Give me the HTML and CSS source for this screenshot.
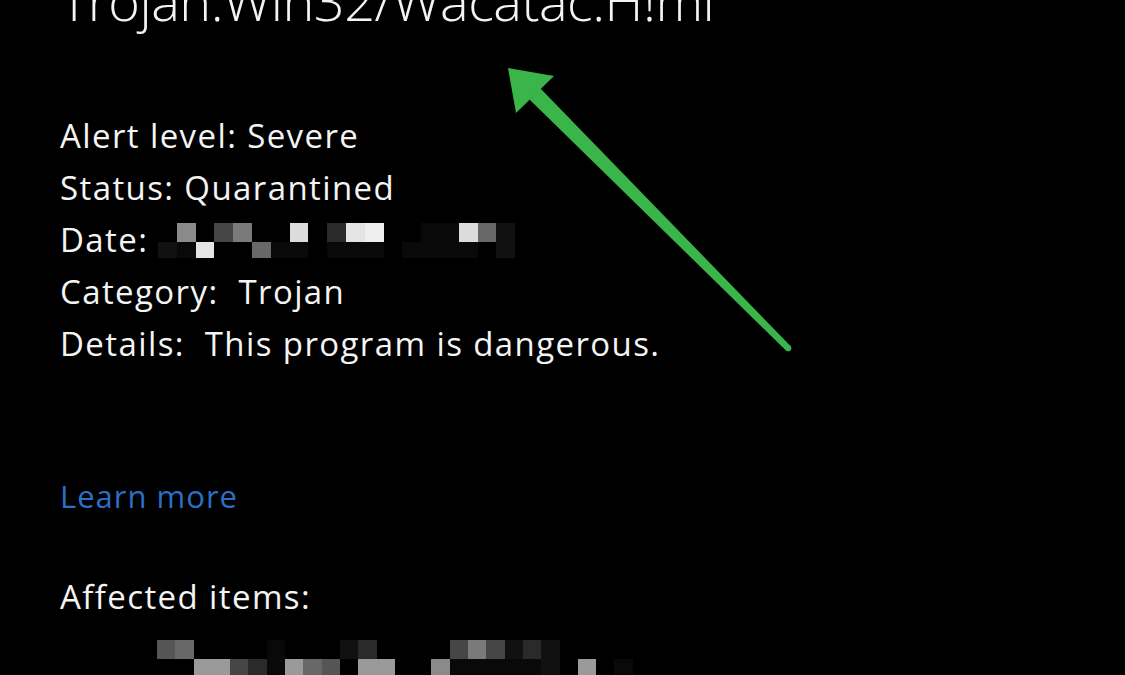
FILE: index.html
```html
<!DOCTYPE html>
<html>
<head>
<meta charset="utf-8">
<link rel="stylesheet" href="styles.css">
</head>
<body>
<div class="page">
  <h1 class="title">Trojan:Win32/Wacatac.H!ml</h1>
  <div class="info">
    <div class="line">Alert level: Severe</div>
    <div class="line">Status: Quarantined</div>
    <div class="line date-row">
      <span class="label">Date:</span>
      <div class="pix date-pix">
        <i class="g0"></i><i class="g8"></i><i class="g0"></i><i class="g4"></i><i class="g7"></i><i class="g0"></i><i class="g0"></i><i class="ga"></i><i class="g0"></i><i class="g3"></i><i class="gb"></i><i class="gc"></i><i class="g0"></i><i class="g0"></i><i class="g1"></i><i class="g1"></i><i class="ga"></i><i class="g6"></i><i class="g2"></i>
        <i class="g2 short"></i><i class="g1 short"></i><i class="gb short"></i><i class="g0 short"></i><i class="g0 short"></i><i class="g6 short"></i><i class="g1 short"></i><i class="g1 short"></i><i class="g0 short"></i><i class="g1 short"></i><i class="g1 short"></i><i class="g1 short"></i><i class="g0 short"></i><i class="g1 short"></i><i class="g1 short"></i><i class="g1 short"></i><i class="g1 short"></i><i class="g0 short"></i><i class="g2 short"></i>
      </div>
    </div>
    <div class="line">Category:&nbsp; Trojan</div>
    <div class="line">Details:&nbsp; This program is dangerous.</div>
  </div>
  <a class="learn">Learn more</a>
  <div class="affected">Affected items:</div>
  <div class="pix aff-pix">
    <i class="g5"></i><i class="g6"></i><i class="g0"></i><i class="g0"></i><i class="g0"></i><i class="g0"></i><i class="g1"></i><i class="g0"></i><i class="g0"></i><i class="g0"></i><i class="g2"></i><i class="g3"></i><i class="g0"></i><i class="g0"></i><i class="g0"></i><i class="g0"></i><i class="g4"></i><i class="g7"></i><i class="g4"></i><i class="g2"></i><i class="g3"></i><i class="g2"></i><i class="g0"></i><i class="g0"></i><i class="g0"></i><i class="g0"></i>
    <i class="g0"></i><i class="g0"></i><i class="g9"></i><i class="g9"></i><i class="g4"></i><i class="g3"></i><i class="g1"></i><i class="g9"></i><i class="g6"></i><i class="g5"></i><i class="g0"></i><i class="g9"></i><i class="g9"></i><i class="g0"></i><i class="g0"></i><i class="g8"></i><i class="g1"></i><i class="g1"></i><i class="g1"></i><i class="g1"></i><i class="g1"></i><i class="g2"></i><i class="g0"></i><i class="g9"></i><i class="g0"></i><i class="g1"></i>
  </div>
</div>
<svg class="arrow" width="1125" height="675" viewBox="0 0 1125 675">
  <polygon points="508,68 554,76 516,113" fill="#3ab54a"/>
  <polygon points="540.5,88.5 529.5,99.5 786,350.5 790.5,346" fill="#3ab54a"/>
  <circle cx="788.2" cy="348.2" r="3.1" fill="#3ab54a"/>
</svg>
</body>
</html>
```
FILE: styles.css
```css
html, body {
  margin: 0;
  padding: 0;
  background: #000;
  overflow: hidden;
}
body {
  width: 1125px;
  height: 675px;
  position: relative;
  font-family: "Open Sans", "Noto Sans", sans-serif;
  color: #f4f4f4;
}
.page {
  padding-left: 60px;
}
.title {
  margin: -30px 0 0 0;
  font-size: 54px;
  line-height: 60px;
  font-weight: 300;
  letter-spacing: -0.5px;
  white-space: nowrap;
}
.info {
  margin-top: 80px;
}
.line {
  font-size: 33px;
  line-height: 52px;
  height: 52px;
  letter-spacing: 1.4px;
  white-space: nowrap;
}
.date-row {
  display: flex;
}
.label {
  width: 98px;
  flex: none;
}
.pix {
  display: grid;
}
.pix i {
  display: block;
}
.date-pix {
  grid-template-columns: repeat(19, 18.8px);
  grid-template-rows: 19px 16px;
  margin-top: 9px;
  align-self: flex-start;
}
.aff-pix {
  grid-template-columns: repeat(26, 18.3px);
  grid-template-rows: 19px 19px;
  margin: 17px 0 0 97px;
}
.learn {
  display: block;
  margin-top: 100px;
  font-size: 31px;
  line-height: 52px;
  letter-spacing: 1px;
  color: #2a6fc8;
}
.affected {
  margin-top: 49px;
  font-size: 33px;
  line-height: 52px;
  letter-spacing: 1.4px;
}
.g0 { background: #000; }
.g1 { background: #090909; }
.g2 { background: #111; }
.g3 { background: #2a2a2a; }
.g4 { background: #464646; }
.g5 { background: #555; }
.g6 { background: #686868; }
.g7 { background: #7a7a7a; }
.g8 { background: #8a8a8a; }
.g9 { background: #9a9a9a; }
.ga { background: #dcdcdc; }
.gb { background: #e4e4e4; }
.gc { background: #efefef; }
.arrow {
  position: absolute;
  left: 0;
  top: 0;
}
```
